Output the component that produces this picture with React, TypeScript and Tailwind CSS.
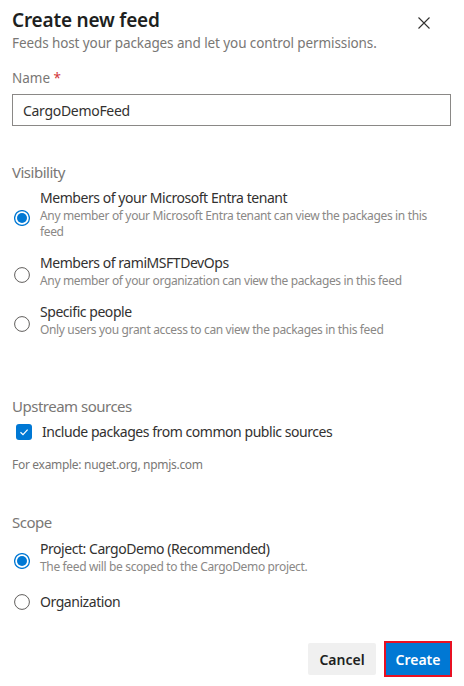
import React, { useState } from 'react';

function Radio({ checked }: { checked: boolean }) {
  return (
    <svg width="16" height="16" viewBox="0 0 16 16" className="shrink-0">
      <circle cx="8" cy="8" r="7.4" fill="white" stroke={checked ? '#0078d4' : '#605e5c'} strokeWidth={checked ? 1.3 : 1} />
      {checked && <circle cx="8" cy="8" r="5" fill="#0078d4" />}
    </svg>
  );
}

interface Option {
  id: string;
  label: string;
  desc?: string;
}

function RadioGroup({ options, value, onChange }: { options: Option[]; value: string; onChange: (v: string) => void }) {
  return (
    <div className="flex flex-col">
      {options.map((o, i) => (
        <div
          key={o.id}
          onClick={() => onChange(o.id)}
          className={`flex items-center gap-[10px] pl-[2px] cursor-pointer ${i > 0 ? (o.desc ? 'mt-[13px]' : 'mt-[17px]') : ''}`}
        >
          <div className={o.desc ? 'mt-2' : ''}>
            <Radio checked={value === o.id} />
          </div>
          <div className="flex flex-col">
            <span className="text-[14px] leading-[20px] tracking-[-0.45px] text-[#323130]">{o.label}</span>
            {o.desc && <span className="text-[12px] leading-[16px] tracking-[-0.35px] text-[#8a8886]">{o.desc}</span>}
          </div>
        </div>
      ))}
    </div>
  );
}

export default function App() {
  const [name, setName] = useState('CargoDemoFeed');
  const [visibility, setVisibility] = useState('tenant');
  const [upstream, setUpstream] = useState(true);
  const [scope, setScope] = useState('project');

  return (
    <div className="w-[464px] h-[686px] bg-white px-3 font-['Noto_Sans',sans-serif] text-[#323130]">
      <div className="flex justify-between items-start pt-[6px]">
        <h1 className="text-[19px] leading-[28px] font-semibold tracking-[-0.2px] text-[#201f1e]">Create new feed</h1>
        <button className="mt-[11px] mr-[22px] text-[#323130]">
          <svg width="12" height="12" viewBox="0 0 12 12">
            <path d="M0.5 0.5 L11.5 11.5 M11.5 0.5 L0.5 11.5" stroke="#323130" strokeWidth="1.1" />
          </svg>
        </button>
      </div>
      <p className="text-[13.5px] leading-[18px] tracking-[-0.1px] text-[#797775]">Feeds host your packages and let you control permissions.</p>

      <div className="mt-[17px] text-[13.5px] leading-[18px] text-[#797775]">
        Name <span className="text-[#d13438]">*</span>
      </div>
      <input
        value={name}
        onChange={(e) => setName(e.target.value)}
        className="mt-[7px] w-[439px] h-[32px] border border-[#8a8886] px-[10px] text-[14px] tracking-[-0.3px] text-[#323130] outline-none"
      />

      <div className="mt-[36px] text-[15px] leading-[20px] tracking-[-0.5px] text-[#797775]">Visibility</div>
      <div className="mt-[6px]">
        <RadioGroup
          value={visibility}
          onChange={setVisibility}
          options={[
            {
              id: 'tenant',
              label: 'Members of your Microsoft Entra tenant',
              desc: 'Any member of your Microsoft Entra tenant can view the packages in this feed',
            },
            {
              id: 'org',
              label: 'Members of ramiMSFTDevOps',
              desc: 'Any member of your organization can view the packages in this feed',
            },
            {
              id: 'people',
              label: 'Specific people',
              desc: 'Only users you grant access to can view the packages in this feed',
            },
          ]}
        />
      </div>

      <div className="mt-[58px] text-[15px] leading-[20px] tracking-[-0.5px] text-[#797775]">Upstream sources</div>
      <label className="mt-[6px] flex items-center gap-[10px] pl-1 cursor-pointer">
        <span
          onClick={() => setUpstream(!upstream)}
          className={`w-4 h-4 rounded-[3px] flex items-center justify-center ${upstream ? 'bg-[#0078d4]' : 'border border-[#323130] bg-white'}`}
        >
          {upstream && (
            <svg width="10" height="10" viewBox="0 0 10 10">
              <path d="M1.5 5.2 L4 7.6 L8.6 2.6" fill="none" stroke="white" strokeWidth="1.2" />
            </svg>
          )}
        </span>
        <span className="text-[14px] leading-[20px] tracking-[-0.45px] text-[#323130]">Include packages from common public sources</span>
      </label>
      <div className="mt-[15px] text-[12px] leading-[16px] tracking-[-0.3px] text-[#797775]">For example: nuget.org, npmjs.com</div>

      <div className="mt-[39px] text-[15px] leading-[20px] tracking-[-0.5px] text-[#797775]">Scope</div>
      <div className="mt-[7px]">
        <RadioGroup
          value={scope}
          onChange={setScope}
          options={[
            { id: 'project', label: 'Project: CargoDemo (Recommended)', desc: 'The feed will be scoped to the CargoDemo project.' },
            { id: 'organization', label: 'Organization' },
          ]}
        />
      </div>

      <div className="mt-[31px] flex justify-end gap-[10px] pr-[2px]">
        <button className="w-[68px] h-[32px] rounded-[2px] bg-[#f0f0f0] text-[14px] font-semibold text-[#201f1e]">Cancel</button>
        <button className="w-[64px] h-[32px] rounded-none bg-[#0078d4] text-[14px] font-semibold text-white outline-2 outline-offset-0 outline-[#e81123]">
          Create
        </button>
      </div>
    </div>
  );
}
